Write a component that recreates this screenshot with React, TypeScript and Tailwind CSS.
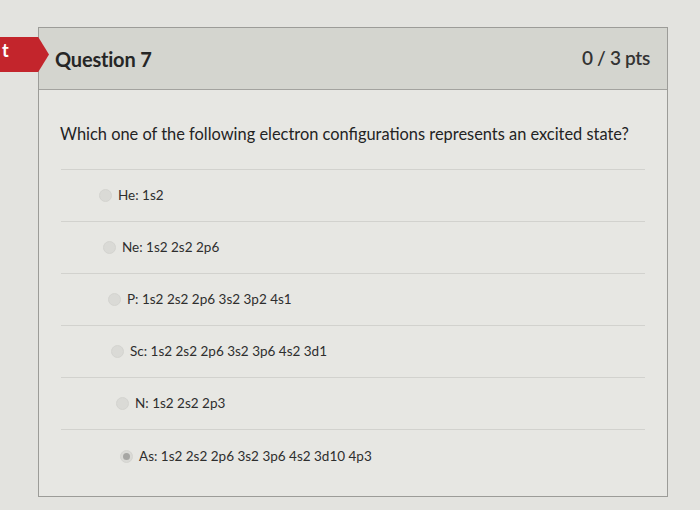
import React from 'react';

const options = [
  { label: 'He: 1s2', indent: 'pl-[38px]' },
  { label: 'Ne: 1s2 2s2 2p6', indent: 'pl-[42px]' },
  { label: 'P: 1s2 2s2 2p6 3s2 3p2 4s1', indent: 'pl-[47px]' },
  { label: 'Sc: 1s2 2s2 2p6 3s2 3p6 4s2 3d1', indent: 'pl-[50px]' },
  { label: 'N: 1s2 2s2 2p3', indent: 'pl-[55px]' },
  { label: 'As: 1s2 2s2 2p6 3s2 3p6 4s2 3d10 4p3', indent: 'pl-[59px]', selected: true },
];

function Radio({ selected }: { selected?: boolean }) {
  return (
    <span className="w-[13px] h-[13px] rounded-full border border-[#d4d4d0] bg-[#dadad6] flex items-center justify-center shrink-0">
      {selected && <span className="w-[7px] h-[7px] rounded-full bg-[#a6a6a3]" />}
    </span>
  );
}

export default function App() {
  return (
    <div
      className="relative w-[700px] h-[510px] overflow-hidden bg-[#e3e3df] pt-[27px] pl-[38px]"
      style={{ fontFamily: 'Lato, "Open Sans", sans-serif' }}
    >
      {/* red tag on the left */}
      <div className="absolute left-0 top-[37px] h-[35px] w-[49px] bg-[#c3252c] [clip-path:polygon(0_0,78%_0,100%_50%,78%_100%,0_100%)]">
        <span className="absolute left-[2px] top-[4px] text-white text-[18px] font-bold leading-none">t</span>
      </div>

      <div className="w-[630px] border border-[#9c9c98] bg-[#e7e7e3]">
        {/* Header */}
        <div className="h-[62px] bg-[#d4d5cf] border-b border-[#a3a39f] flex items-center justify-between pl-[16px] pr-[17px]">
          <h2 className="text-[20px] font-bold text-[#262626] tracking-[-0.2px]">Question 7</h2>
          <span className="text-[19px] font-semibold text-[#333333] tracking-[-0.3px]">0 / 3 pts</span>
        </div>

        {/* Body */}
        <div className="pt-[34px] pb-[14px]">
          <p className="pl-[21px] text-[16.4px] leading-[20px] text-[#232323]">
            Which one of the following electron configurations represents an excited state?
          </p>
          <div className="mx-[22px] mt-[25px] border-t border-[#d2d2ce]">
            {options.map((o, i) => (
              <div
                key={o.label}
                className={`h-[52px] flex items-center gap-[6px] ${o.indent} ${
                  i < options.length - 1 ? 'border-b border-[#d2d2ce]' : ''
                }`}
              >
                <Radio selected={o.selected} />
                <span className="text-[13.5px] text-[#2e2e2e]">{o.label}</span>
              </div>
            ))}
          </div>
        </div>
      </div>
    </div>
  );
}
